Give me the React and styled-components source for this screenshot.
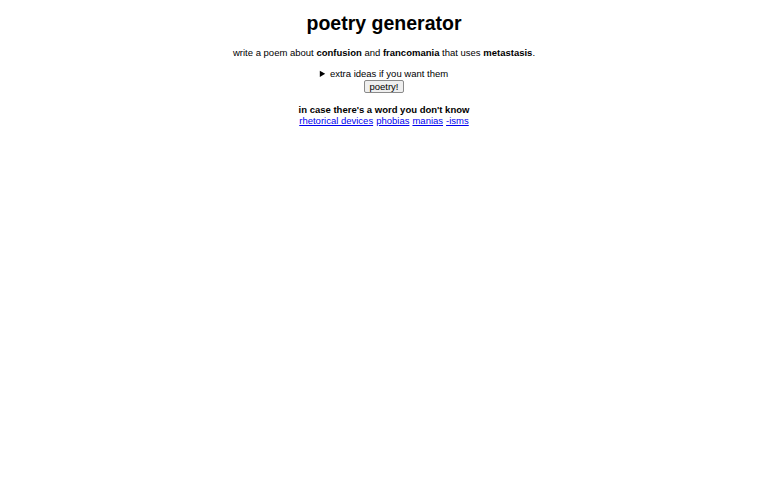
import React from "react";
import styled, { createGlobalStyle } from "styled-components";

const GlobalStyle = createGlobalStyle`
  body {
    margin: 0;
    background: #ffffff;
    font-family: "Liberation Sans", Arial, sans-serif;
    color: #000000;
  }
`;

const Page = styled.main`
  display: flex;
  flex-direction: column;
  align-items: center;
  text-align: center;
  padding-top: 12px;
`;

const Title = styled.h1`
  font-size: 19.5px;
  line-height: 23px;
  font-weight: bold;
  margin: 0 0 12px;
`;

const Prompt = styled.p`
  font-size: 9.5px;
  line-height: 11px;
  margin: 0 0 10px;
`;

const Extras = styled.details`
  font-size: 9.5px;
  line-height: 11px;
  summary {
    cursor: pointer;
  }
`;

const Button = styled.button`
  font-family: "Liberation Sans", Arial, sans-serif;
  font-size: 9.5px;
  line-height: 10px;
  padding: 0 4px;
  margin-top: 1px;
  height: 13px;
  background: #efefef;
  border: 1px solid #8a8a8a;
  border-radius: 2px;
  color: #000;
`;

const Help = styled.section`
  margin-top: 11px;
  font-size: 9.5px;
  line-height: 11px;
`;

const HelpTitle = styled.div`
  font-weight: bold;
`;

const Links = styled.div`
  display: flex;
  justify-content: center;
  gap: 3px;
  a {
    color: #0000ee;
    text-decoration: underline;
  }
`;

export default function App() {
  return (
    <>
      <GlobalStyle />
      <Page>
        <Title>poetry generator</Title>
        <Prompt>
          write a poem about <b>confusion</b> and <b>francomania</b> that uses{" "}
          <b>metastasis</b>.
        </Prompt>
        <Extras>
          <summary>extra ideas if you want them</summary>
        </Extras>
        <Button>poetry!</Button>
        <Help>
          <HelpTitle>in case there's a word you don't know</HelpTitle>
          <Links>
            <a href="#devices">rhetorical devices</a>
            <a href="#phobias">phobias</a>
            <a href="#manias">manias</a>
            <a href="#isms">-isms</a>
          </Links>
        </Help>
      </Page>
    </>
  );
}
